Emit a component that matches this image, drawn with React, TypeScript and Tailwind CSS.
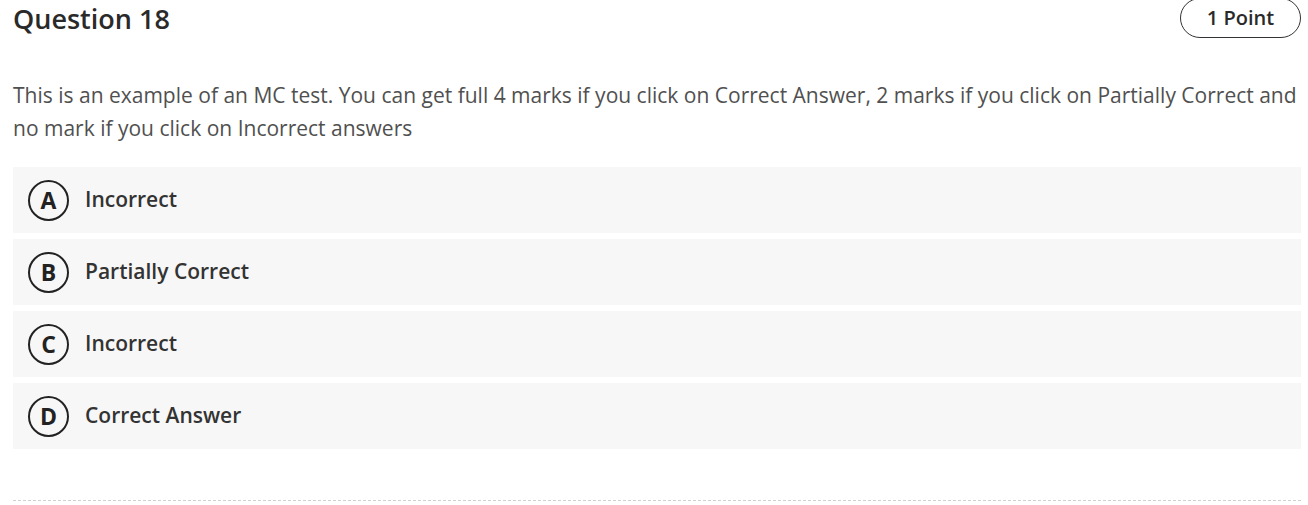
const options = [
  { letter: "A", text: "Incorrect" },
  { letter: "B", text: "Partially Correct" },
  { letter: "C", text: "Incorrect" },
  { letter: "D", text: "Correct Answer" },
];

export default function App() {
  return (
    <div className="min-h-screen bg-white font-['Open_Sans',sans-serif] text-[#262626]">
      <div className="px-[13px] pr-[7px]">
        <div className="flex items-center justify-between h-[37px]">
          <h1 className="text-[27px] font-semibold leading-none text-[#2a2a2a]">Question 18</h1>
          <span className="-mt-[2px] h-[40px] w-[121px] flex items-center justify-center rounded-full border border-[#333] text-[20px] font-semibold text-[#2a2a2a]">
            1 Point
          </span>
        </div>
        <p className="mt-[42px] text-[21px] leading-[33px] text-[#505050]">
          This is an example of an MC test. You can get full 4 marks if you click on Correct Answer, 2 marks if you click on Partially Correct and no mark if you click on Incorrect answers
        </p>
        <div className="mt-[22px] flex flex-col gap-[6px]">
          {options.map((o) => (
            <div
              key={o.letter}
              className="h-[66px] bg-[#f7f7f7] flex items-center pl-[15px] gap-[16px]"
            >
              <span className="w-[41px] h-[41px] rounded-full border-[2.5px] border-[#222] flex items-center justify-center text-[23px] font-bold leading-none text-[#222]">
                {o.letter}
              </span>
              <span className="text-[21px] font-semibold text-[#333]">{o.text}</span>
            </div>
          ))}
        </div>
        <div className="mt-[51px] border-t border-dashed border-[#d0d0d0]" />
      </div>
    </div>
  );
}
